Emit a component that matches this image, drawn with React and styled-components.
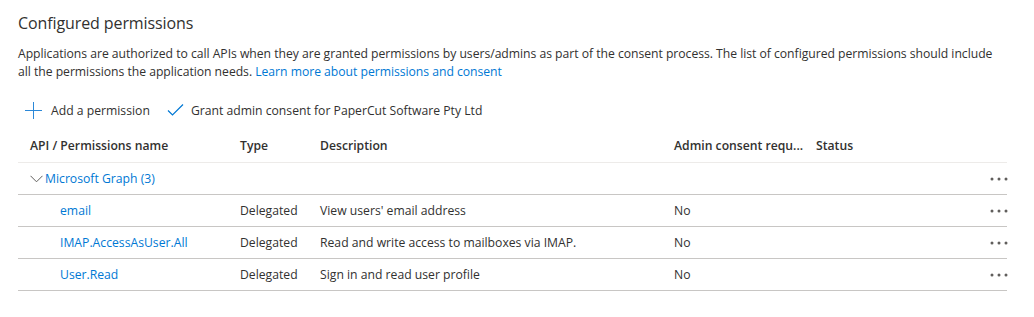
import styled, { createGlobalStyle } from "styled-components";

const GlobalStyle = createGlobalStyle`
  body {
    margin: 0;
    background: #ffffff;
    font-family: "Open Sans", "Noto Sans", sans-serif;
    color: #323130;
  }
`;

const permissions = [
  { name: "email", type: "Delegated", desc: "View users' email address", admin: "No" },
  { name: "IMAP.AccessAsUser.All", type: "Delegated", desc: "Read and write access to mailboxes via IMAP.", admin: "No" },
  { name: "User.Read", type: "Delegated", desc: "Sign in and read user profile", admin: "No" },
];

const Page = styled.div`
  padding: 10px 27px 0 18px;
`;

const Title = styled.h2`
  margin: 0;
  font-size: 16px;
  font-weight: 400;
  line-height: 26px;
  letter-spacing: -0.1px;
`;

const Intro = styled.p`
  margin: 9px 0 0;
  font-size: 12.2px;
  line-height: 18px;
  letter-spacing: -0.03px;
`;

const Link = styled.a`
  color: #0078d4;
  text-decoration: none;
`;

const Toolbar = styled.div`
  display: flex;
  align-items: center;
  gap: 17px;
  height: 32px;
  margin-top: 13px;
  padding-left: 7px;
`;

const ToolButton = styled.button`
  display: flex;
  align-items: center;
  gap: ${(p) => p.$gap || 9}px;
  border: none;
  background: none;
  padding: 0;
  font: inherit;
  font-size: 12.2px;
  color: #323130;
  cursor: pointer;
`;

const Grid = styled.div`
  display: grid;
  grid-template-columns: 210px 80px 354px 142px 1fr 40px;
`;

const HeaderRow = styled(Grid)`
  height: 34px;
  align-items: center;
  border-bottom: 1px solid #edebe9;
  padding-top: 2px;
`;

const HeadCell = styled.div`
  padding-left: 12px;
  font-size: 12.2px;
  font-weight: 600;
  white-space: nowrap;
`;

const Row = styled(Grid)`
  height: 31px;
  align-items: center;
  border-bottom: 1px solid #c8c6c4;
`;

const Cell = styled.div`
  padding-left: ${(p) => p.$indent || 12}px;
  font-size: 12.2px;
  white-space: nowrap;
  color: ${(p) => (p.$link ? "#0078d4" : "#323130")};
`;

const GroupCell = styled.div`
  grid-column: 1 / 6;
  display: flex;
  align-items: center;
  gap: 2px;
  padding-left: 12px;
  font-size: 12.2px;
  color: #0078d4;
`;

const MoreCell = styled.div`
  display: flex;
  justify-content: flex-end;
  margin-right: -1px;
`;

const Plus = () => (
  <svg width="17" height="17" viewBox="0 0 17 17">
    <path d="M8.5 0v17M0 8.5h17" stroke="#2b88d8" strokeWidth="1" fill="none" />
  </svg>
);

const Check = () => (
  <svg width="17" height="14" viewBox="0 0 17 14">
    <path d="M1 7.5l4.5 4.5L16 1.5" stroke="#0078d4" strokeWidth="1.2" fill="none" />
  </svg>
);

const Chevron = () => (
  <svg width="13" height="8" viewBox="0 0 13 8">
    <path d="M0.5 0.8l6 6 6-6" stroke="#605e5c" strokeWidth="1" fill="none" />
  </svg>
);

const More = () => (
  <svg width="18" height="4" viewBox="0 0 18 4">
    <circle cx="2" cy="2" r="1.5" fill="#605e5c" />
    <circle cx="9" cy="2" r="1.5" fill="#605e5c" />
    <circle cx="16" cy="2" r="1.5" fill="#605e5c" />
  </svg>
);

export default function App() {
  return (
    <Page>
      <GlobalStyle />
      <Title>Configured permissions</Title>
      <Intro>
        Applications are authorized to call APIs when they are granted permissions by users/admins as part of the
        consent process. The list of configured permissions should include
        <br />
        all the permissions the application needs. <Link href="#">Learn more about permissions and consent</Link>
      </Intro>
      <Toolbar>
        <ToolButton>
          <Plus />
          Add a permission
        </ToolButton>
        <ToolButton $gap={7}>
          <Check />
          Grant admin consent for PaperCut Software Pty Ltd
        </ToolButton>
      </Toolbar>
      <HeaderRow>
        <HeadCell>API / Permissions name</HeadCell>
        <HeadCell>Type</HeadCell>
        <HeadCell>Description</HeadCell>
        <HeadCell>Admin consent requ...</HeadCell>
        <HeadCell>Status</HeadCell>
        <div />
      </HeaderRow>
      <Row>
        <GroupCell>
          <Chevron />
          Microsoft Graph (3)
        </GroupCell>
        <MoreCell>
          <More />
        </MoreCell>
      </Row>
      {permissions.map((p) => (
        <Row key={p.name}>
          <Cell $indent={42} $link>
            {p.name}
          </Cell>
          <Cell>{p.type}</Cell>
          <Cell>{p.desc}</Cell>
          <Cell>{p.admin}</Cell>
          <Cell />
          <MoreCell>
            <More />
          </MoreCell>
        </Row>
      ))}
    </Page>
  );
}
